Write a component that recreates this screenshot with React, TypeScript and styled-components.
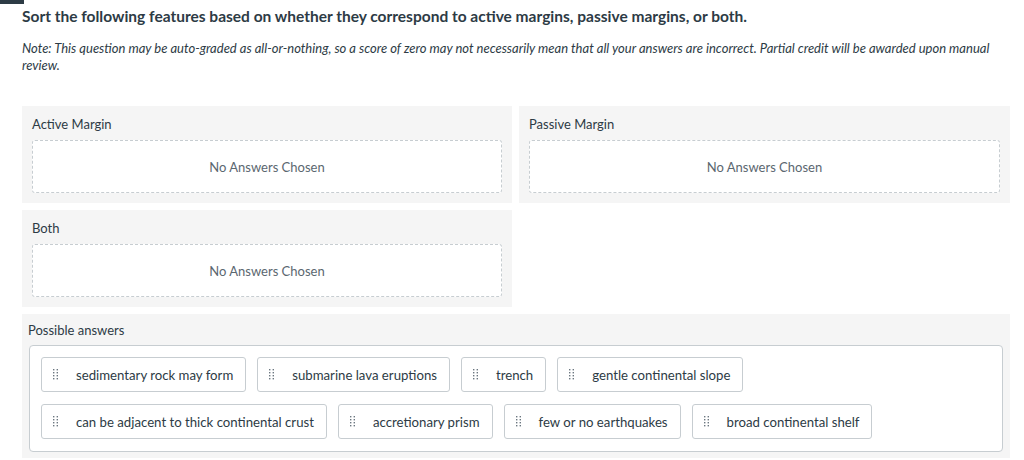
import React from 'react';
import styled, { createGlobalStyle } from 'styled-components';

const GlobalStyle = createGlobalStyle`
	body {
		margin: 0;
		background: #ffffff;
		font-family: Lato, "Open Sans", sans-serif;
		color: #2d3b45;
	}
`;

const Page = styled.div`
	position: relative;
	padding: 5px 14px 0 22px;
`;

const TopMark = styled.div`
	position: absolute;
	left: 0;
	top: 0;
	width: 24px;
	height: 4px;
	background: #2d3b45;
`;

const Title = styled.h1`
	margin: 0;
	font-size: 15.5px;
	font-weight: 700;
	line-height: 22px;
`;

const Note = styled.p`
	margin: 13px 0 0;
	font-size: 13px;
	font-style: italic;
	line-height: 17px;
	padding-right: 4px;
`;

const Buckets = styled.div`
	display: grid;
	grid-template-columns: 490px 491px;
	gap: 7px;
	margin-top: 32px;
`;

const Bucket = styled.div`
	background: #f5f5f5;
	padding: 10px;
`;

const BucketLabel = styled.div`
	font-size: 13px;
	line-height: 16px;
	margin-bottom: 8px;
`;

const DropZone = styled.div`
	height: 51px;
	border: 1px dashed #c7cdd1;
	border-radius: 3px;
	background: #ffffff;
	display: flex;
	align-items: center;
	justify-content: center;
	font-size: 13px;
	color: #5b6770;
`;

const Pool = styled.div`
	background: #f5f5f5;
	margin-top: 7px;
	padding: 8px 7px 6px 7px;
`;

const PoolLabel = styled.div`
	font-size: 13px;
	line-height: 16px;
	margin: 0 0 7px -1px;
`;

const PoolBox = styled.div`
	background: #ffffff;
	border: 1px solid #c7cdd1;
	border-radius: 4px;
	padding: 11px 11px 12px;
	display: flex;
	flex-direction: column;
	gap: 12px;
`;

const ChipRow = styled.div`
	display: flex;
	gap: 11px;
`;

const Chip = styled.div`
	display: flex;
	align-items: center;
	gap: 18px;
	height: 35px;
	box-sizing: border-box;
	padding: 0 12px 0 11px;
	border: 1px solid #c7cdd1;
	border-radius: 3px;
	background: #ffffff;
	font-size: 13.2px;
	color: #2d3b45;
`;

const Handle = () => (
	<svg width="5" height="12" viewBox="0 0 5 12" fill="#6b7780">
		{[0, 3, 6, 9].map((y) => (
			<React.Fragment key={y}>
				<rect x="0" y={y} width="1.4" height="1.4" />
				<rect x="3.6" y={y} width="1.4" height="1.4" />
			</React.Fragment>
		))}
	</svg>
);

const rows = [
	['sedimentary rock may form', 'submarine lava eruptions', 'trench', 'gentle continental slope'],
	['can be adjacent to thick continental crust', 'accretionary prism', 'few or no earthquakes', 'broad continental shelf'],
];

const buckets = ['Active Margin', 'Passive Margin', 'Both'];

const App: React.FC = () => {
	return (
		<>
			<GlobalStyle />
			<Page>
				<TopMark />
				<Title>Sort the following features based on whether they correspond to active margins, passive margins, or both.</Title>
				<Note>Note: This question may be auto-graded as all-or-nothing, so a score of zero may not necessarily mean that all your answers are incorrect. Partial credit will be awarded upon manual review.</Note>
				<Buckets>
					{buckets.map((name) => (
						<Bucket key={name}>
							<BucketLabel>{name}</BucketLabel>
							<DropZone>No Answers Chosen</DropZone>
						</Bucket>
					))}
				</Buckets>
				<Pool>
					<PoolLabel>Possible answers</PoolLabel>
					<PoolBox>
						{rows.map((row, i) => (
							<ChipRow key={i}>
								{row.map((item) => (
									<Chip key={item}>
										<Handle />
										<span>{item}</span>
									</Chip>
								))}
							</ChipRow>
						))}
					</PoolBox>
				</Pool>
			</Page>
		</>
	);
};

export default App;
